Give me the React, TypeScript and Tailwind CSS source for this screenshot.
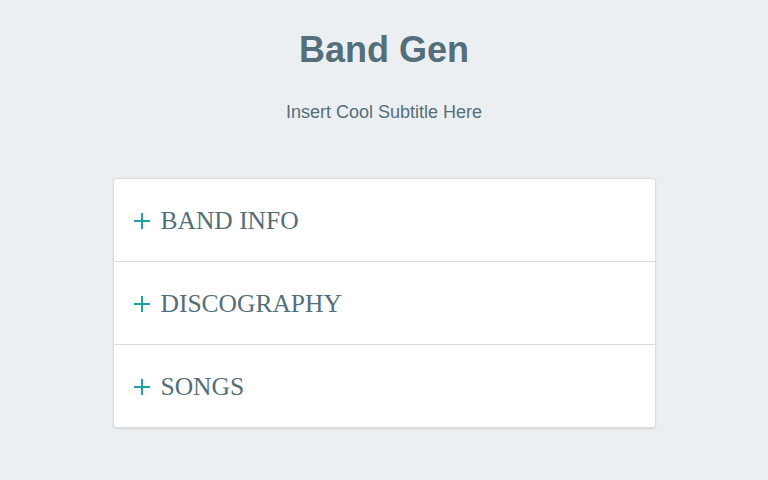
import React from "react";

const items = ["BAND INFO", "DISCOGRAPHY", "SONGS"];

export default function App() {
  return (
    <div className="min-h-screen w-full bg-[#eceff1] flex flex-col items-center" style={{ fontFamily: '"Liberation Sans", Arial, sans-serif' }}>
      <h1 className="mt-[28px] text-[36px] leading-[44px] font-bold text-[#546e7a]">Band Gen</h1>
      <p className="mt-[29px] text-[18px] leading-[22px] text-[#546e7a]">Insert Cool Subtitle Here</p>
      <div className="mt-[55px] w-[543px] bg-white border border-[#dddddd] rounded-[3px] shadow-[0_1px_2px_0_rgba(0,0,0,0.1)]">
        {items.map((t, i) => (
          <div
            key={t}
            className={`h-[82px] flex items-center pl-[19px] pt-[2px] ${i < items.length - 1 ? "h-[83px] border-b border-[#dddddd]" : ""}`}
          >
            <svg width="18" height="18" viewBox="0 0 18 18" className="mr-[10px]">
              <path d="M9 1v16M1 9h16" stroke="#1ea0a8" strokeWidth="2" fill="none" />
            </svg>
            <span className="text-[25.5px] text-[#546e7a]" style={{ fontFamily: '"Liberation Serif", "Times New Roman", serif' }}>{t}</span>
          </div>
        ))}
      </div>
    </div>
  );
}
